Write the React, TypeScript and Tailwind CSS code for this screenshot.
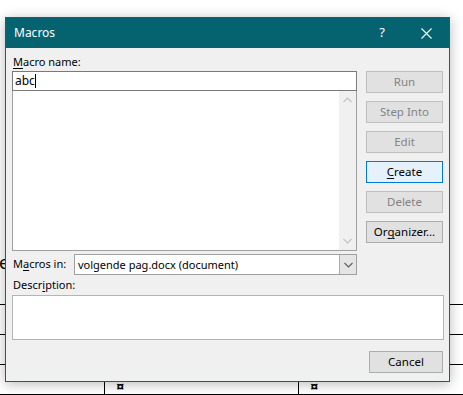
import React from 'react';

const font = { fontFamily: '"Noto Sans", "Open Sans", sans-serif' };

interface BtnProps {
  label: React.ReactNode;
  disabled?: boolean;
  focused?: boolean;
  w?: string;
}

const Btn = ({ label, disabled, focused, w = 'w-[77px]' }: BtnProps) => {
  const cls = disabled
    ? 'border-[#bfbfbf] bg-[#e1e1e1] text-[#838383]'
    : focused
    ? 'border-[#0078d7] bg-[#e5f1fb] text-black'
    : 'border-[#adadad] bg-[#e1e1e1] text-black';
  return (
    <div className={`${w} h-[22px] border ${cls} flex items-center justify-center text-[11.5px] leading-none`}>
      {label}
    </div>
  );
};

const Chevron = ({ up, color }: { up?: boolean; color: string }) => (
  <svg width="9" height="6" viewBox="0 0 9 6">
    <path d={up ? 'M0.5 5 L4.5 1 L8.5 5' : 'M0.5 1 L4.5 5 L8.5 1'} fill="none" stroke={color} strokeWidth="1.2" />
  </svg>
);

const Document = () => (
  <div className="pt-[304px]">
    {[0, 1, 2].map((r) => (
      <div key={r} className="grid grid-cols-[105px_194px_1fr] h-[30px] border-t border-black">
        <div className="border-r border-black" />
        <div className="border-r border-black" />
        <div />
      </div>
    ))}
    <div className="border-t border-black" />
  </div>
);

const Dialog = () => (
  <div className="absolute left-[5px] top-[17px] w-[445px] h-[365px] border border-[#0a6673] bg-[#f0f0f0] shadow-[0_2px_12px_rgba(0,0,0,0.28)] flex flex-col">
    <div className="h-[30px] bg-[#05636f] flex items-center text-white text-[12px]">
      <span className="pl-[8px] flex-1">Macros</span>
      <span className="w-[46px] text-center text-[13px] pl-[4px]">?</span>
      <span className="w-[46px] flex justify-center">
        <svg width="11" height="11" viewBox="0 0 11 11">
          <path d="M0.5 0.5 L10.5 10.5 M10.5 0.5 L0.5 10.5" stroke="white" strokeWidth="1.1" />
        </svg>
      </span>
    </div>
    <div className="flex-1 flex flex-col pl-[6px] pr-[5px] pt-[6px] text-[11px] text-black">
      <div className="flex gap-[9px]">
        <div className="w-[345px] flex flex-col">
          <div className="h-[17px] leading-[16px] pl-[1px]">
            <span className="underline underline-offset-2">M</span>acro name:
          </div>
          <div className="h-[20px] bg-white border border-[#7a7a7a] flex items-center pl-[2px] leading-none text-[12px]">
            abc<span className="inline-block w-px h-[14px] bg-black" />
          </div>
          <div className="h-[160px] bg-white border border-t-0 border-[#a0a0a0] flex justify-end">
            <div className="w-[17px] bg-[#f0f0f0] flex flex-col items-center justify-between py-[6px]">
              <Chevron up color="#c2c2c2" />
              <Chevron color="#c2c2c2" />
            </div>
          </div>
        </div>
        <div className="pt-[17px] flex flex-col gap-[8px]">
          <Btn label="Run" disabled />
          <Btn label="Step Into" disabled />
          <Btn label="Edit" disabled />
          <Btn label={<><span className="underline underline-offset-2">C</span>reate</>} focused />
          <Btn label="Delete" disabled />
          <Btn label={<>Or<span className="underline underline-offset-2">g</span>anizer...</>} />
        </div>
      </div>
      <div className="flex items-center mt-[3px] h-[21px]">
        <div className="w-[62px] pl-[1px]">
          M<span className="underline underline-offset-2">a</span>cros in:
        </div>
        <div className="w-[283px] h-[21px] bg-white border border-[#a0a0a0] flex items-center">
          <span className="flex-1 pl-[3px] leading-none">volgende pag.docx (document)</span>
          <div className="w-[17px] h-full bg-[#e5e5e5] border-l border-[#acacac] flex items-center justify-center">
            <Chevron color="#606060" />
          </div>
        </div>
      </div>
      <div className="h-[19px] leading-[18px] pl-[1px] mt-[1px]">
        Descr<span className="underline underline-offset-2">i</span>ption:
      </div>
      <div className="w-[432px] h-[45px] bg-white border border-[#b4b4b4]" />
      <div className="flex justify-end mt-[11px] pr-[1px]">
        <Btn label="Cancel" w="w-[74px]" />
      </div>
    </div>
  </div>
);

const App = () => {
  return (
    <div className="relative w-[463px] h-[395px] bg-white overflow-hidden" style={font}>
      <Document />
      <span className="absolute left-[-1px] top-[253px] text-[18px] leading-none text-black">e</span>
      <span className="absolute left-[116px] top-[380px] text-[15px] leading-[13px] font-bold text-black">¤</span>
      <span className="absolute left-[310px] top-[380px] text-[15px] leading-[13px] font-bold text-black">¤</span>
      <Dialog />
    </div>
  );
};

export default App;
